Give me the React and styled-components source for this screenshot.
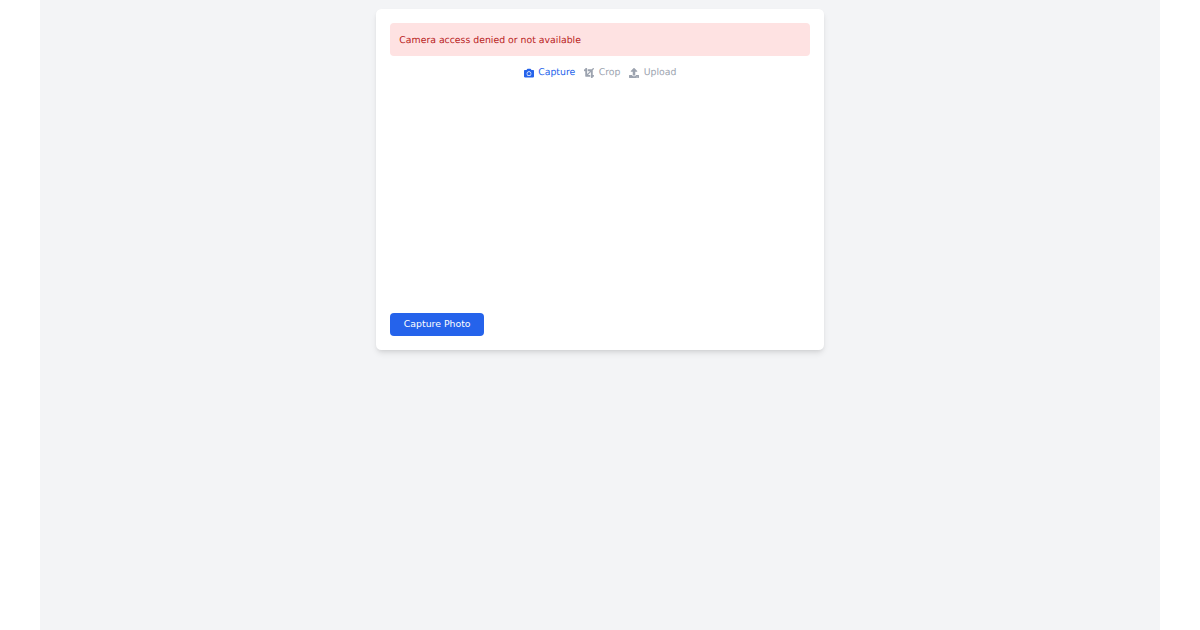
import React from 'react';
import styled, { createGlobalStyle } from 'styled-components';
import { FaCamera, FaCrop, FaUpload } from 'react-icons/fa';

const GlobalStyle = createGlobalStyle`
  html, body {
    margin: 0;
    padding: 0;
    background: #fff;
    font-family: "DejaVu Sans", sans-serif;
    text-rendering: geometricPrecision;
  }
`;

const Page = styled.div`
  width: 1120px;
  height: 630px;
  margin: 0 auto;
  padding-top: 9.33px;
  box-sizing: border-box;
  background: #f3f4f6;
  overflow: hidden;
`;

const Card = styled.div`
  width: 448px;
  height: 340.67px;
  margin: 0 auto;
  padding: 14px;
  box-sizing: border-box;
  display: flex;
  flex-direction: column;
  background: #fff;
  border-radius: 5.33px;
  box-shadow: 0 4px 6px -1px rgba(0, 0, 0, 0.1), 0 2px 4px -2px rgba(0, 0, 0, 0.1);
`;

const Alert = styled.div`
  height: 32.67px;
  padding: 1px 9.33px 0;
  display: flex;
  align-items: center;
  box-sizing: border-box;
  background: #fee2e2;
  border-radius: 4px;
  color: #b91c1c;
  font-size: 9.33px;
`;

const Tabs = styled.div`
  margin-top: 9.67px;
  height: 14px;
  display: flex;
  justify-content: center;
  gap: 8.67px;
`;

const Tab = styled.div`
  display: flex;
  align-items: center;
  gap: 5.33px;
  font-size: 9.33px;
  color: ${(p) => (p.$active ? '#2563eb' : '#9ca3af')};

  svg {
    width: 10px;
    height: 10px;
    margin-right: -0.67px;
  }
`;

const Spacer = styled.div`
  flex: 1;
`;

const CaptureButton = styled.button`
  align-self: flex-start;
  width: 94.33px;
  height: 23px;
  padding: 0 0 1px;
  border: 0;
  border-radius: 4px;
  background: #2563eb;
  color: #fff;
  font-family: inherit;
  font-size: 9.33px;
`;

export default function App() {
  return (
    <>
      <GlobalStyle />
      <Page>
        <Card>
          <Alert>Camera access denied or not available</Alert>
          <Tabs>
            <Tab $active>
              <FaCamera />
              Capture
            </Tab>
            <Tab>
              <FaCrop />
              Crop
            </Tab>
            <Tab>
              <FaUpload />
              Upload
            </Tab>
          </Tabs>
          <Spacer />
          <CaptureButton>Capture Photo</CaptureButton>
        </Card>
      </Page>
    </>
  );
}
